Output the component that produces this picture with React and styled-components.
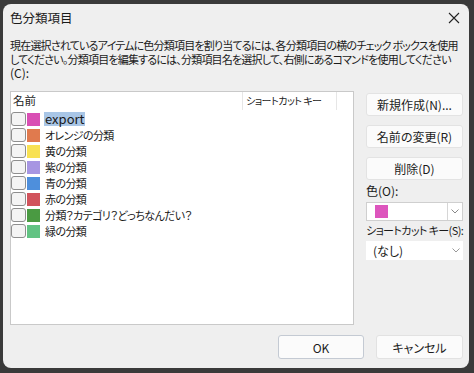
import React from 'react'
import styled, { createGlobalStyle } from 'styled-components'

const GlobalStyle = createGlobalStyle`
    html, body {
        margin: 0;
        padding: 0;
        background: #3a3a3a;
    }
    body {
        font-family: 'Noto Sans CJK JP', 'Noto Sans', sans-serif;
        font-feature-settings: 'palt';
        color: #1a1a1a;
        width: 474px;
        height: 373px;
        overflow: hidden;
    }
`

const categories = [
    { name: 'export', color: '#d94fb4', selected: true },
    { name: 'オレンジの分類', color: '#e07a4e' },
    { name: '黄の分類', color: '#f8e153' },
    { name: '紫の分類', color: '#a796e2' },
    { name: '青の分類', color: '#4e8fdc' },
    { name: '赤の分類', color: '#d1535c' },
    { name: '分類？カテゴリ？どっちなんだい？', color: '#4a9a42' },
    { name: '緑の分類', color: '#62c383' },
]

function App() {
    return (
        <>
            <GlobalStyle />
            <Dialog>
                <TitleBar>
                    <Title>色分類項目</Title>
                    <Close>
                        <svg width='12' height='12' viewBox='0 0 12 12'>
                            <path d='M1 1L11 11M11 1L1 11' stroke='#222' strokeWidth='1.1' />
                        </svg>
                    </Close>
                </TitleBar>
                <Desc>
                    <DescLine>現在選択されているアイテムに色分類項目を割り当てるには、各分類項目の横のチェック ボックスを使用</DescLine>
                    <DescLine>してください。分類項目を編集するには、分類項目名を選択して、右側にあるコマンドを使用してください</DescLine>
                    <DescLine $hotkey>(C):</DescLine>
                </Desc>
                <Body>
                    <ListBox>
                        <ListHead>
                            <HeadCell $w={232}>名前</HeadCell>
                            <HeadCell $w={94} $sep>ショートカット キー</HeadCell>
                        </ListHead>
                        {categories.map((c) => (
                            <Row key={c.name}>
                                <Check />
                                <Swatch $color={c.color} />
                                <RowLabel $selected={c.selected}>{c.name}</RowLabel>
                            </Row>
                        ))}
                    </ListBox>
                    <Side>
                        <SideButton>新規作成(N)...</SideButton>
                        <SideButton>名前の変更(R)</SideButton>
                        <SideButton>削除(D)</SideButton>
                        <FieldLabel>色(O):</FieldLabel>
                        <ColorSelect>
                            <SelectValue>
                                <Swatch $color='#dd55bd' />
                            </SelectValue>
                            <Chevron $divided>
                                <svg width='8' height='5' viewBox='0 0 8 5'>
                                    <path d='M0.5 0.5L4 4L7.5 0.5' stroke='#888' fill='none' />
                                </svg>
                            </Chevron>
                        </ColorSelect>
                        <FieldLabel $tight>ショートカット キー(S):</FieldLabel>
                        <PlainSelect>
                            <SelectValue>(なし)</SelectValue>
                            <Chevron>
                                <svg width='8' height='5' viewBox='0 0 8 5'>
                                    <path d='M0.5 0.5L4 4L7.5 0.5' stroke='#999' fill='none' />
                                </svg>
                            </Chevron>
                        </PlainSelect>
                    </Side>
                </Body>
                <Footer>
                    <FooterButton $primary>OK</FooterButton>
                    <FooterButton>キャンセル</FooterButton>
                </Footer>
            </Dialog>
        </>
    )
}

export default App

const Dialog = styled.div`
    box-sizing: border-box;
    width: 466px;
    height: 364px;
    margin: 4px 0 0 3px;
    background: #efefef;
    border-radius: 8px;
    display: flex;
    flex-direction: column;
`

const TitleBar = styled.div`
    height: 26px;
    padding: 0 9px 0 7px;
    display: flex;
    align-items: center;
    justify-content: space-between;
`

const Title = styled.div`
    font-size: 12.5px;
    margin-top: 1px;
`

const Close = styled.div`
    display: flex;
    align-items: center;
    margin-top: 1px;
`

const Desc = styled.div`
    margin-top: 8px;
    padding: 0 7px;
    display: flex;
    flex-direction: column;
`

const DescLine = styled.div`
    height: 14px;
    line-height: 14px;
    white-space: nowrap;
    font-size: ${(p) => (p.$hotkey ? 12 : 11)}px;
    letter-spacing: ${(p) => (p.$hotkey ? 0 : -0.8)}px;
`

const Body = styled.div`
    display: flex;
    gap: 12px;
    padding: 0 6px 0 7px;
    margin-top: 11px;
`

const ListBox = styled.div`
    box-sizing: border-box;
    width: 344px;
    height: 234px;
    background: #fff;
    border: 1px solid #c9c9c9;
`

const ListHead = styled.div`
    height: 18px;
    display: flex;
    align-items: center;
    margin-bottom: 1px;
`

const HeadCell = styled.div`
    box-sizing: border-box;
    width: ${(p) => p.$w}px;
    height: 18px;
    line-height: 17px;
    padding-left: ${(p) => (p.$sep ? 3 : 2)}px;
    border-right: 1px solid #e6e6e6;
    font-size: ${(p) => (p.$sep ? 10 : 11.5)}px;
    letter-spacing: ${(p) => (p.$sep ? -0.5 : 0)}px;
    white-space: nowrap;
    color: #222;
`

const Row = styled.div`
    height: 16px;
    display: flex;
    align-items: center;
`

const Check = styled.div`
    box-sizing: border-box;
    width: 15px;
    height: 14px;
    border: 1px solid #8e8e8e;
    border-radius: 3px;
    background: #f4f4f4;
`

const Swatch = styled.div`
    width: 13px;
    height: 13px;
    margin-left: 1px;
    background: ${(p) => p.$color};
`

const RowLabel = styled.div`
    margin-left: 4px;
    padding: 0 1px;
    line-height: 14px;
    white-space: nowrap;
    background: ${(p) => (p.$selected ? '#a9c6e6' : 'transparent')};
    font-size: ${(p) => (p.$selected ? 13 : 11)}px;
    letter-spacing: ${(p) => (p.$selected ? 0 : -0.6)}px;
`

const Side = styled.div`
    width: 97px;
    display: flex;
    flex-direction: column;
    margin-top: 2px;
`

const SideButton = styled.div`
    box-sizing: border-box;
    height: 23px;
    margin-bottom: 9px;
    background: #fbfbfb;
    border: 1px solid #e3e3e3;
    border-radius: 3px;
    display: flex;
    align-items: center;
    justify-content: center;
    font-size: 12px;
    color: #1c1c1c;
`

const FieldLabel = styled.div`
    font-size: ${(p) => (p.$tight ? 11 : 12)}px;
    letter-spacing: ${(p) => (p.$tight ? -0.6 : 0)}px;
    line-height: 16px;
    margin-top: -6px;
    margin-bottom: 3px;
    white-space: nowrap;
`

const ColorSelect = styled.div`
    box-sizing: border-box;
    height: 19px;
    margin-bottom: 7px;
    background: #fff;
    border: 1px solid #cfcfcf;
    display: flex;
    align-items: center;
`

const PlainSelect = styled.div`
    box-sizing: border-box;
    height: 19px;
    background: #fff;
    display: flex;
    align-items: center;
`

const SelectValue = styled.div`
    flex: 1;
    display: flex;
    align-items: center;
    padding-left: 7px;
    font-size: 12px;

    ${Swatch} {
        margin-left: 1px;
    }
`

const Chevron = styled.div`
    width: 14px;
    height: 100%;
    display: flex;
    align-items: center;
    justify-content: center;
    border-left: ${(p) => (p.$divided ? '1px solid #d6d6d6' : 'none')};
`

const Footer = styled.div`
    display: flex;
    justify-content: flex-end;
    gap: 12px;
    padding: 0 6px 0 0;
    margin-top: 10px;
`

const FooterButton = styled.div`
    box-sizing: border-box;
    width: ${(p) => (p.$primary ? 86 : 87)}px;
    height: 24px;
    border-radius: 3px;
    background: #fbfbfb;
    border: 1px solid ${(p) => (p.$primary ? '#c4cad3' : '#e2e2e2')};
    display: flex;
    align-items: center;
    justify-content: center;
    font-size: 12px;
    color: #1c1c1c;
`
